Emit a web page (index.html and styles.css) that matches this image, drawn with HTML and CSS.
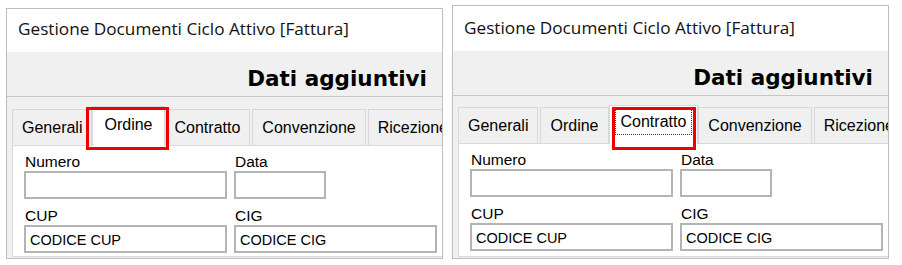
FILE: index.html
```html
<!DOCTYPE html>
<html lang="it">
<head>
    <meta charset="UTF-8">
    <meta name="viewport" content="width=device-width, initial-scale=1.0">
    <link rel="stylesheet" href="styles.css">
    <title>Dati aggiuntivi</title>
</head>
<body>
    <div class="shots">
        <section class="window window-order">
            <div class="window-title">Gestione Documenti Ciclo Attivo [Fattura]</div>
            <div class="window-header"><h1>Dati aggiuntivi</h1></div>
            <div class="window-body">
                <ul class="tabs">
                    <li class="tab">Generali</li>
                    <li class="tab tab-active">Ordine</li>
                    <li class="tab">Contratto</li>
                    <li class="tab">Convenzione</li>
                    <li class="tab">Ricezione</li>
                </ul>
                <div class="tab-page">
                    <div class="form-grid">
                        <label class="field"><span>Numero</span><input class="input" type="text" value=""></label>
                        <label class="field"><span>Data</span><input class="input input-short" type="text" value=""></label>
                        <label class="field"><span>CUP</span><input class="input" type="text" value="CODICE CUP"></label>
                        <label class="field"><span>CIG</span><input class="input" type="text" value="CODICE CIG"></label>
                    </div>
                </div>
            </div>
            <div class="highlight"></div>
        </section>

        <section class="window window-contract">
            <div class="window-title">Gestione Documenti Ciclo Attivo [Fattura]</div>
            <div class="window-header"><h1>Dati aggiuntivi</h1></div>
            <div class="window-body">
                <ul class="tabs">
                    <li class="tab">Generali</li>
                    <li class="tab">Ordine</li>
                    <li class="tab tab-active tab-focus"><span>Contratto</span></li>
                    <li class="tab">Convenzione</li>
                    <li class="tab">Ricezione</li>
                </ul>
                <div class="tab-page">
                    <div class="form-grid">
                        <label class="field"><span>Numero</span><input class="input" type="text" value=""></label>
                        <label class="field"><span>Data</span><input class="input input-short" type="text" value=""></label>
                        <label class="field"><span>CUP</span><input class="input" type="text" value="CODICE CUP"></label>
                        <label class="field"><span>CIG</span><input class="input" type="text" value="CODICE CIG"></label>
                    </div>
                </div>
            </div>
            <div class="highlight"></div>
        </section>
    </div>
</body>
</html>
```

FILE: styles.css
```css
body{
    margin: 0;
    background: #fff;
    font-family: "Liberation Sans", Arial, sans-serif;
    color: #000;
}
.shots{
    display: flex;
    align-items: flex-start;
    gap: 9px;
    padding-left: 6px;
}
.window{
    position: relative;
    box-sizing: border-box;
    width: 437px;
    height: 251px;
    margin-top: 8px;
    border: 1px solid #bdbdbd;
    display: flex;
    flex-direction: column;
    overflow: hidden;
}
.window-contract{
    height: 254px;
    margin-top: 5px;
}
.window-title{
    background: #fff;
    font-family: "Open Sans", sans-serif;
    font-size: 17.2px;
    line-height: 20px;
    padding: 10px 0 13px 11px;
    color: #111;
}
.window-contract .window-title{
    padding-top: 12px;
}
.window-header{
    background: #f0f0f0;
    height: 45px;
    box-sizing: border-box;
    border-bottom: 1px solid #c6c6c6;
    display: flex;
    justify-content: flex-end;
    align-items: flex-end;
    padding: 0 15px 5px 0;
}
.window-header h1{
    margin: 0;
    font-family: "DejaVu Sans", sans-serif;
    font-weight: bold;
    font-size: 21.5px;
    line-height: 24px;
}
.window-body{
    flex: 1;
    background: #f0f0f0;
    padding: 12px 0 1px 5px;
    display: flex;
    flex-direction: column;
}
.window-contract .window-body{
    padding-top: 11px;
}
.tabs{
    list-style: none;
    margin: 0;
    padding: 0;
    display: flex;
    align-items: flex-end;
    gap: 2px;
    white-space: nowrap;
}
.tab{
    flex-shrink: 0;
    border: 1px solid #d9d9d9;
    border-bottom: none;
    background: #f0f0f0;
    font-size: 16px;
    line-height: 20px;
    padding: 8px 9px 7px;
    color: #000;
}
.tab-active{
    position: relative;
    z-index: 1;
    background: #fff;
    margin: -3px -2px -1px;
    padding: 8px 11px 11px;
}
.tab-focus{
    margin-top: -2px;
    padding: 3px 5px 9px;
}
.tab-focus span{
    display: inline-block;
    padding: 3px 6px;
    outline: 1px dotted #333;
    outline-offset: -1px;
}
.tab-page{
    flex: 1;
    background: #fff;
    border: 1px solid #d9d9d9;
    margin-right: -30px;
    padding: 7px 0 2px 11px;
}
.form-grid{
    display: grid;
    grid-template-columns: 203px 203px;
    column-gap: 7px;
    row-gap: 8px;
}
.field{
    display: flex;
    flex-direction: column;
    align-items: flex-start;
}
.field span{
    font-size: 15.5px;
    line-height: 18px;
    padding-left: 1px;
}
.input{
    box-sizing: border-box;
    width: 203px;
    height: 28px;
    margin: 0;
    border: 2px solid #b4b4b4;
    padding: 2px 4px 0;
    font-family: "Liberation Sans", Arial, sans-serif;
    font-size: 14.5px;
    color: #000;
    background: #fff;
    outline: none;
}
.input-short{
    width: 92px;
}
.highlight{
    position: absolute;
    box-sizing: border-box;
    border: 3px solid #ee0000;
    left: 79px;
    top: 98px;
    width: 83px;
    height: 43px;
    z-index: 2;
}
.window-contract .highlight{
    left: 159px;
    top: 101px;
    width: 84px;
    height: 43px;
}
```
